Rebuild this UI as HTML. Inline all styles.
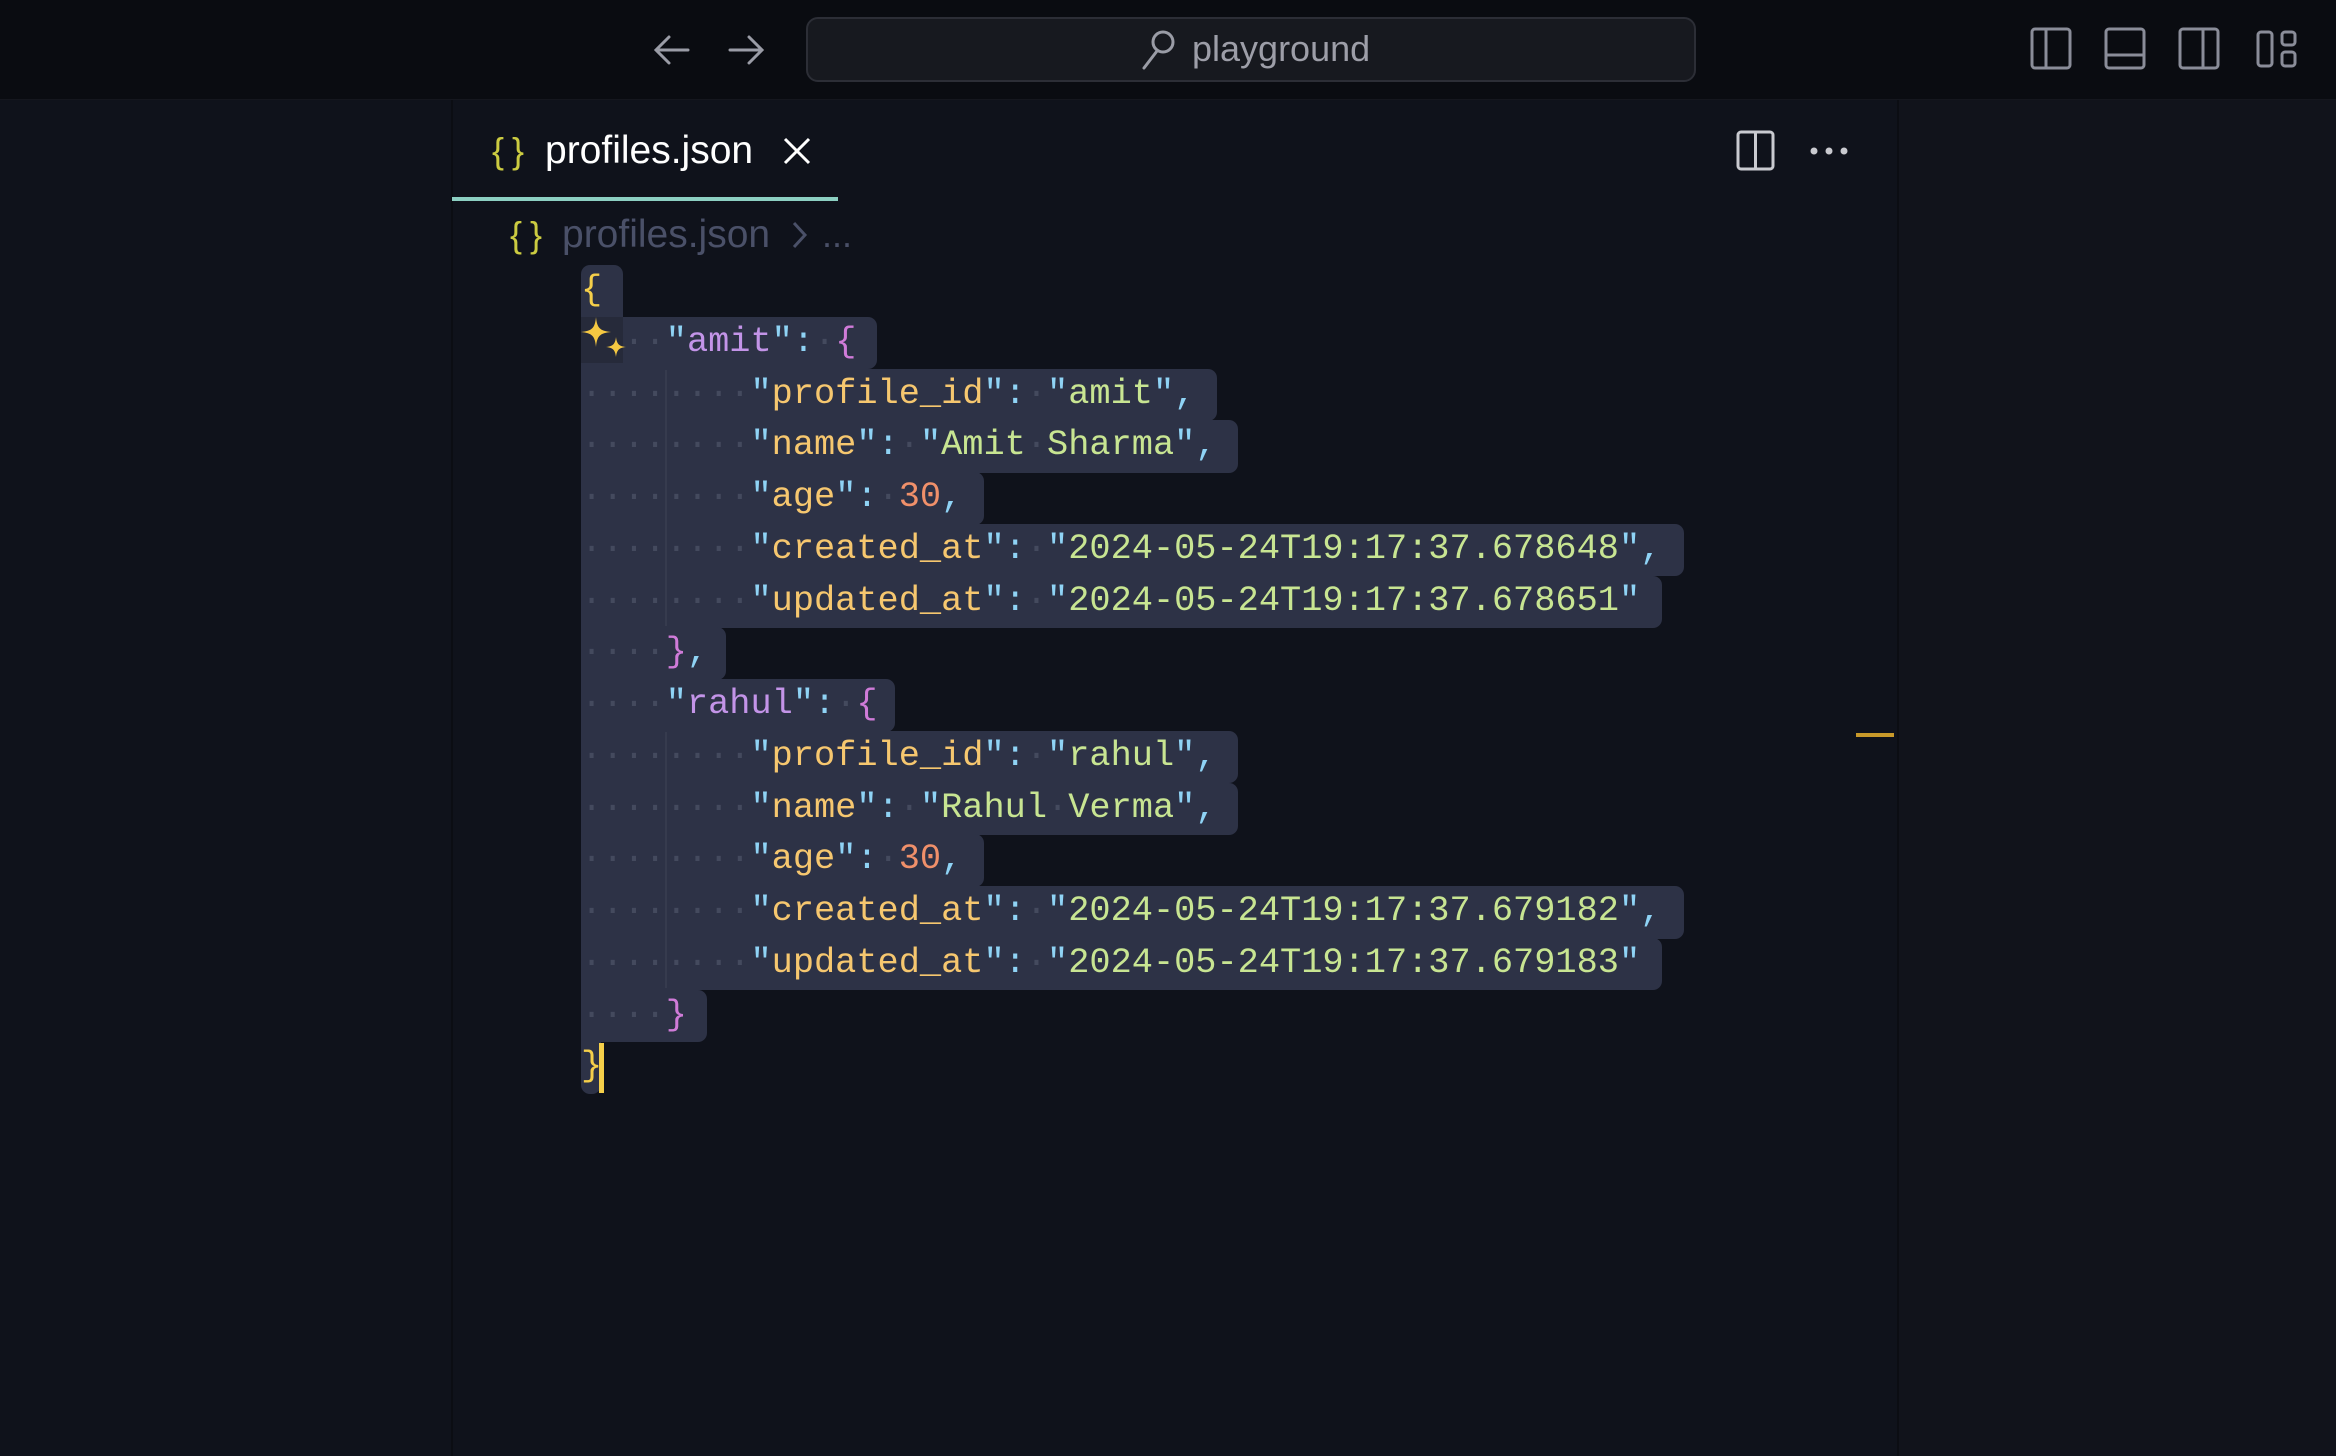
<!DOCTYPE html>
<html><head><meta charset="utf-8"><style>
*{margin:0;padding:0;box-sizing:border-box}
body{width:2336px;height:1456px;background:#0f121b;position:relative;overflow:hidden;font-family:"Liberation Sans",sans-serif}
.title{position:absolute;left:0;top:0;width:2336px;height:100px;background:#0a0c11;border-bottom:1px solid #15171e}
.left{position:absolute;left:0;top:100px;width:453px;height:1356px;background:#0f121b;border-right:2px solid #0b0d13}
.right{position:absolute;left:1897px;top:100px;width:439px;height:1356px;background:#11131b;border-left:2px solid #0b0d13}
.search{position:absolute;left:806px;top:17px;width:890px;height:65px;border:2px solid #2c2e36;border-radius:12px;background:#17191f}
.code{position:absolute;left:581px;font-family:"Liberation Mono",monospace;font-size:35.3px;height:51.75px;line-height:51.75px;white-space:pre}
.sel{position:absolute;left:0;top:0;height:52.5px;background:#2d3246;border-radius:0 9px 9px 0}
.t{position:relative}
.d{color:#444a5e}.q{color:#8fd3f5}.k1{color:#c394e8}.k{color:#f6c76f}.s{color:#c8e592}.n{color:#f0906a}.b1{color:#f5cf4a}.b2{color:#cf7bd8}.p{color:#8fd3f5}
</style></head><body>
<div class="title"></div>
<div class="left"></div>
<div class="right"></div>
<svg style="position:absolute;left:652px;top:32px" width="40" height="36" viewBox="0 0 40 36" fill="none" stroke="#9a9ca6" stroke-width="3" stroke-linecap="round"><path d="M36 18H5M17 5L4 18l13 13"/></svg>
<svg style="position:absolute;left:726px;top:32px" width="40" height="36" viewBox="0 0 40 36" fill="none" stroke="#9a9ca6" stroke-width="3" stroke-linecap="round"><path d="M4 18h31M23 5l13 13-13 13"/></svg>
<div class="search"></div>
<svg style="position:absolute;left:1138px;top:28px" width="40" height="42" viewBox="0 0 40 42" fill="none" stroke="#9a9ca6" stroke-width="3" stroke-linecap="round"><circle cx="25" cy="14" r="10"/><path d="M19 23L6 40"/></svg>
<div style="position:absolute;left:1192px;top:26px;font-size:36px;color:#9d9ea8;line-height:46px">playground</div>
<svg style="position:absolute;left:2030px;top:26px" width="306" height="50" viewBox="0 0 306 50" fill="none" stroke="#8a8d99" stroke-width="3">
<rect x="2" y="3" width="38" height="39" rx="3"/><path d="M16 3v39"/>
<rect x="76" y="3" width="38" height="39" rx="3"/><path d="M76 29h38"/>
<rect x="150" y="3" width="38" height="39" rx="3"/><path d="M173 3v39"/>
<rect x="228" y="6" width="14" height="34" rx="3"/><rect x="252" y="6" width="13" height="13" rx="3"/><rect x="252" y="26" width="13" height="14" rx="3"/>
</svg>
<div style="position:absolute;left:492px;top:128px;font-size:36px;color:#cbcb41;line-height:46px;letter-spacing:8px">{}</div>
<div style="position:absolute;left:545px;top:128px;font-size:39px;color:#fff;line-height:46px">profiles.json</div>
<svg style="position:absolute;left:782px;top:137px" width="30" height="28" viewBox="0 0 30 28" stroke="#fff" stroke-width="3"><path d="M3 2l24 24M27 2L3 26"/></svg>
<div style="position:absolute;left:452px;top:197px;width:386px;height:4px;background:#8ccfc2"></div>
<div style="position:absolute;left:510px;top:212px;font-size:36px;color:#cbcb41;line-height:46px;letter-spacing:8px">{}</div>
<div style="position:absolute;left:562px;top:212px;font-size:39px;color:#4a5068;line-height:46px">profiles.json</div>
<svg style="position:absolute;left:790px;top:220px" width="20" height="30" viewBox="0 0 20 30" fill="none" stroke="#4a5068" stroke-width="3"><path d="M4 3l11 12L4 27"/></svg>
<div style="position:absolute;left:822px;top:212px;font-size:36px;color:#4a5068;line-height:46px">...</div>
<svg style="position:absolute;left:1736px;top:130px" width="40" height="42" viewBox="0 0 40 42" fill="none" stroke="#c9cad0" stroke-width="3"><rect x="2" y="2" width="35" height="37" rx="3"/><path d="M19.5 2v37"/></svg>
<svg style="position:absolute;left:1808px;top:143px" width="44" height="16"><circle cx="6" cy="8" r="3.5" fill="#c9cad0"/><circle cx="21" cy="8" r="3.5" fill="#c9cad0"/><circle cx="36" cy="8" r="3.5" fill="#c9cad0"/></svg>
<div style="position:absolute;left:1856px;top:733px;width:38px;height:4px;background:#c8992a"></div>

<div class="code" style="top:265px"><span class="sel" style="width:42px;border-radius:9px 9px 0 0"></span><span class="t b1">{</span></div>
<div class="code" style="top:316.75px"><span class="sel" style="width:296px"></span><span class="t">  <span class="d">··</span><span class="q">"</span><span class="k1">amit</span><span class="q">"</span><span class="p">:</span><span class="d">·</span><span class="b2">{</span></span></div>
<div class="code" style="top:368.5px"><span class="sel" style="width:636px"></span><span class="t"><span class="d">········</span><span class="q">"</span><span class="k">profile_id</span><span class="q">"</span><span class="p">:</span><span class="d">·</span><span class="q">"</span><span class="s">amit</span><span class="q">"</span><span class="p">,</span></span></div>
<div class="code" style="top:420.25px"><span class="sel" style="width:657px"></span><span class="t"><span class="d">········</span><span class="q">"</span><span class="k">name</span><span class="q">"</span><span class="p">:</span><span class="d">·</span><span class="q">"</span><span class="s">Amit<span class="d">·</span>Sharma</span><span class="q">"</span><span class="p">,</span></span></div>
<div class="code" style="top:472px"><span class="sel" style="width:403px"></span><span class="t"><span class="d">········</span><span class="q">"</span><span class="k">age</span><span class="q">"</span><span class="p">:</span><span class="d">·</span><span class="n">30</span><span class="p">,</span></span></div>
<div class="code" style="top:523.75px"><span class="sel" style="width:1103px"></span><span class="t"><span class="d">········</span><span class="q">"</span><span class="k">created_at</span><span class="q">"</span><span class="p">:</span><span class="d">·</span><span class="q">"</span><span class="s">2024-05-24T19:17:37.678648</span><span class="q">"</span><span class="p">,</span></span></div>
<div class="code" style="top:575.5px"><span class="sel" style="width:1081px"></span><span class="t"><span class="d">········</span><span class="q">"</span><span class="k">updated_at</span><span class="q">"</span><span class="p">:</span><span class="d">·</span><span class="q">"</span><span class="s">2024-05-24T19:17:37.678651</span><span class="q">"</span></span></div>
<div class="code" style="top:627.25px"><span class="sel" style="width:145px"></span><span class="t"><span class="d">····</span><span class="b2">}</span><span class="p">,</span></span></div>
<div class="code" style="top:679px"><span class="sel" style="width:314px"></span><span class="t"><span class="d">····</span><span class="q">"</span><span class="k1">rahul</span><span class="q">"</span><span class="p">:</span><span class="d">·</span><span class="b2">{</span></span></div>
<div class="code" style="top:730.75px"><span class="sel" style="width:657px"></span><span class="t"><span class="d">········</span><span class="q">"</span><span class="k">profile_id</span><span class="q">"</span><span class="p">:</span><span class="d">·</span><span class="q">"</span><span class="s">rahul</span><span class="q">"</span><span class="p">,</span></span></div>
<div class="code" style="top:782.5px"><span class="sel" style="width:657px"></span><span class="t"><span class="d">········</span><span class="q">"</span><span class="k">name</span><span class="q">"</span><span class="p">:</span><span class="d">·</span><span class="q">"</span><span class="s">Rahul<span class="d">·</span>Verma</span><span class="q">"</span><span class="p">,</span></span></div>
<div class="code" style="top:834.25px"><span class="sel" style="width:403px"></span><span class="t"><span class="d">········</span><span class="q">"</span><span class="k">age</span><span class="q">"</span><span class="p">:</span><span class="d">·</span><span class="n">30</span><span class="p">,</span></span></div>
<div class="code" style="top:886px"><span class="sel" style="width:1103px"></span><span class="t"><span class="d">········</span><span class="q">"</span><span class="k">created_at</span><span class="q">"</span><span class="p">:</span><span class="d">·</span><span class="q">"</span><span class="s">2024-05-24T19:17:37.679182</span><span class="q">"</span><span class="p">,</span></span></div>
<div class="code" style="top:937.75px"><span class="sel" style="width:1081px"></span><span class="t"><span class="d">········</span><span class="q">"</span><span class="k">updated_at</span><span class="q">"</span><span class="p">:</span><span class="d">·</span><span class="q">"</span><span class="s">2024-05-24T19:17:37.679183</span><span class="q">"</span></span></div>
<div class="code" style="top:989.5px"><span class="sel" style="width:126px"></span><span class="t"><span class="d">····</span><span class="b2">}</span></span></div>
<div class="code" style="top:1041.25px"><span class="sel" style="width:20px;border-radius:0 0 9px 9px"></span><span class="t b1">}</span></div>
<div style="position:absolute;left:599px;top:1043px;width:5px;height:50px;background:#f5cf4a"></div>
<div style="position:absolute;left:665px;top:370px;width:2px;height:256px;background:#363b4e"></div>
<div style="position:absolute;left:665px;top:732px;width:2px;height:256px;background:#363b4e"></div>
<div style="position:absolute;left:581px;top:317px;width:42px;height:46px;background:#262a3a"></div>
<svg style="position:absolute;left:581px;top:317px" width="46" height="48" viewBox="0 0 46 48" fill="#f5c842"><path d="M15 0C16 11 19 14 30 15C19 16 16 19 15 30C14 19 11 16 0 15C11 14 14 11 15 0Z"/><path d="M35 20C35.8 27 38 29.2 45 30C38 30.8 35.8 33 35 40C34.2 33 32 30.8 25 30C32 29.2 34.2 27 35 20Z"/></svg>
</body></html>
